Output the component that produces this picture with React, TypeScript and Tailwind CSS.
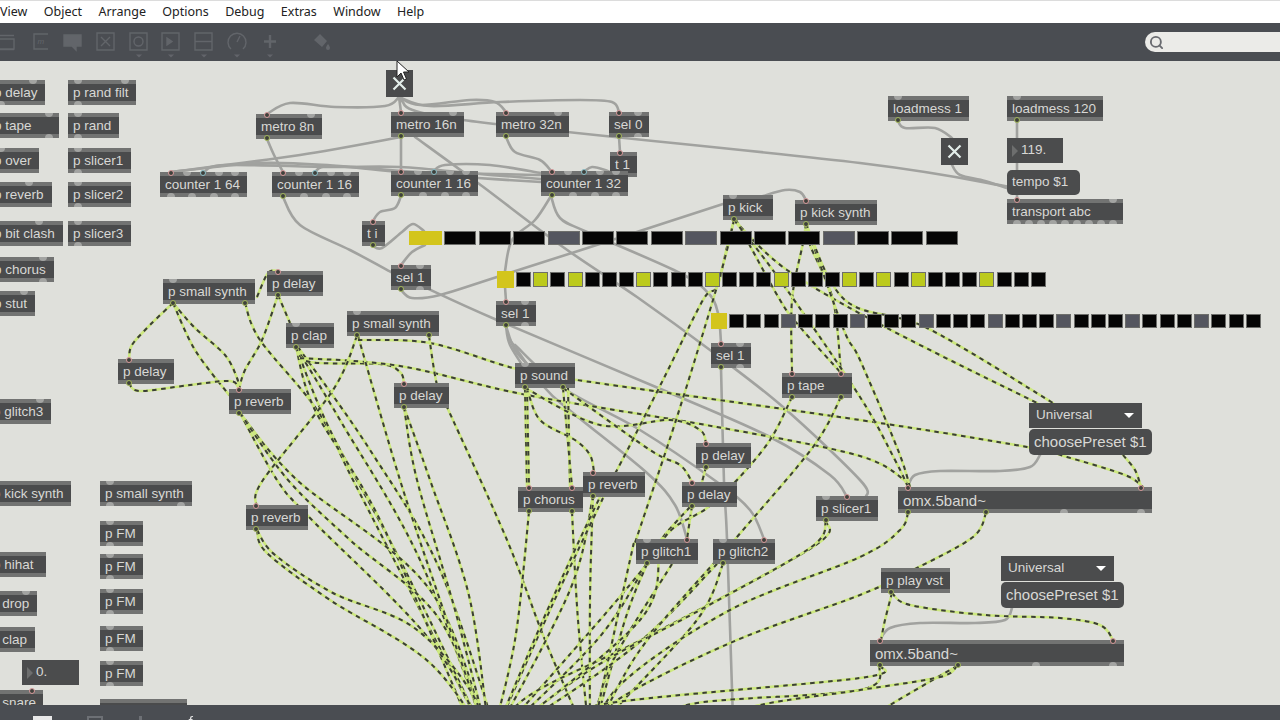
import { Search } from 'lucide-react'

type Pt = [number, number]

interface Box {
  x: number
  y: number
  w: number
  t: string
  kind?: 'msg' | 'menu' | 'num' | 'flat'
  h?: number
  ins?: number[]
  outs?: number[]
  idleIn?: number[]
  idleOut?: number[]
  cyan?: number[]
}

const boxes: Box[] = [
  // left column, cut by the window edge
  { x: -11, y: 80, w: 56, t: 'p delay', idleIn: [44], idleOut: [12] },
  { x: -11, y: 113, w: 70, t: 'p tape', idleIn: [60], idleOut: [60] },
  { x: -11, y: 148, w: 50, t: 'p over', idleIn: [12] },
  { x: -11, y: 182, w: 63, t: 'p reverb', idleIn: [40] },
  { x: -11, y: 221, w: 74, t: 'p bit clash', idleIn: [50] },
  { x: -11, y: 257, w: 65, t: 'p chorus', idleIn: [54], idleOut: [54] },
  { x: -11, y: 291, w: 46, t: 'p stut', idleIn: [35] },
  { x: -12, y: 399, w: 63, t: 'p glitch3', idleIn: [52] },
  { x: -12, y: 481, w: 83, t: 'p kick synth' },
  { x: -12, y: 552, w: 58, t: 'p hihat' },
  { x: -14, y: 591, w: 51, t: 'p drop', idleIn: [40] },
  { x: -14, y: 627, w: 49, t: 'p clap' },
  { x: -14, y: 690, w: 57, t: 'p snare', ins: [46] },
  // second column
  { x: 68, y: 80, w: 68, t: 'p rand filt', idleIn: [10, 57], idleOut: [10] },
  { x: 68, y: 113, w: 51, t: 'p rand', idleOut: [10], idleIn: [10] },
  { x: 68, y: 148, w: 63, t: 'p slicer1', idleIn: [10], idleOut: [10] },
  { x: 68, y: 182, w: 63, t: 'p slicer2', idleIn: [10], idleOut: [10] },
  { x: 68, y: 221, w: 63, t: 'p slicer3', idleIn: [10], idleOut: [10] },
  { x: 100, y: 481, w: 92, t: 'p small synth', idleIn: [10], idleOut: [10, 81] },
  { x: 100, y: 521, w: 43, t: 'p FM', idleIn: [10], idleOut: [10] },
  { x: 100, y: 554, w: 43, t: 'p FM', idleIn: [10], idleOut: [10] },
  { x: 100, y: 589, w: 43, t: 'p FM', idleIn: [10], idleOut: [10] },
  { x: 100, y: 626, w: 43, t: 'p FM', idleIn: [10], idleOut: [10] },
  { x: 100, y: 661, w: 43, t: 'p FM', idleIn: [10], idleOut: [10] },
  { x: 100, y: 699, w: 87, t: '' },
  // metros and counters
  { x: 256, y: 114, w: 66, t: 'metro 8n', ins: [11], outs: [11], idleIn: [55] },
  { x: 391, y: 112, w: 73, t: 'metro 16n', ins: [10], outs: [10], idleIn: [62] },
  { x: 496, y: 112, w: 73, t: 'metro 32n', ins: [10], outs: [10], idleIn: [62] },
  { x: 609, y: 112, w: 40, t: 'sel 0', ins: [10], outs: [10], idleIn: [29], idleOut: [29] },
  { x: 610, y: 152, w: 27, t: 't 1', ins: [10], outs: [10] },
  { x: 160, y: 172, w: 87, t: 'counter 1 64', ins: [11], cyan: [43], idleIn: [27, 59, 75], idleOut: [11, 32, 54, 75] },
  { x: 272, y: 172, w: 87, t: 'counter 1 16', ins: [11], outs: [11], cyan: [43], idleIn: [27, 59, 75], idleOut: [32, 54, 75] },
  { x: 391, y: 171, w: 87, t: 'counter 1 16', ins: [10], outs: [10], cyan: [43], idleIn: [27, 59, 75], idleOut: [32, 54, 75] },
  { x: 541, y: 171, w: 87, t: 'counter 1 32', ins: [11], outs: [11], cyan: [43], idleIn: [27, 59, 75], idleOut: [32, 54, 75] },
  { x: 362, y: 221, w: 23, t: 't i', ins: [11], outs: [11] },
  { x: 391, y: 265, w: 40, t: 'sel 1', ins: [10], outs: [10], idleIn: [29], idleOut: [29] },
  { x: 496, y: 301, w: 40, t: 'sel 1', ins: [10], outs: [10], idleIn: [29], idleOut: [29] },
  { x: 711, y: 343, w: 40, t: 'sel 1', ins: [10], outs: [10], idleIn: [29], idleOut: [29] },
  // instruments
  { x: 723, y: 195, w: 50, t: 'p kick', outs: [11], idleIn: [10] },
  { x: 795, y: 200, w: 82, t: 'p kick synth', ins: [11], outs: [11] },
  { x: 163, y: 279, w: 92, t: 'p small synth', outs: [10, 82], idleIn: [10] },
  { x: 267, y: 271, w: 56, t: 'p delay', ins: [11], outs: [11] },
  { x: 286, y: 323, w: 48, t: 'p clap', outs: [10], idleIn: [10] },
  { x: 347, y: 311, w: 92, t: 'p small synth', outs: [10, 82], idleIn: [10] },
  { x: 118, y: 359, w: 56, t: 'p delay', ins: [11], outs: [11] },
  { x: 229, y: 389, w: 62, t: 'p reverb', ins: [10], outs: [10] },
  { x: 394, y: 383, w: 55, t: 'p delay', ins: [10], outs: [10] },
  { x: 515, y: 363, w: 60, t: 'p sound', outs: [10, 48], idleIn: [10] },
  { x: 782, y: 373, w: 70, t: 'p tape', ins: [10, 59], outs: [10, 59] },
  { x: 696, y: 443, w: 55, t: 'p delay', ins: [10], outs: [10] },
  { x: 682, y: 482, w: 55, t: 'p delay', ins: [10], outs: [10] },
  { x: 518, y: 487, w: 65, t: 'p chorus', ins: [11, 54], outs: [11, 54] },
  { x: 583, y: 472, w: 62, t: 'p reverb', ins: [10], outs: [10] },
  { x: 816, y: 496, w: 62, t: 'p slicer1', ins: [31], outs: [10], idleIn: [10] },
  { x: 636, y: 539, w: 62, t: 'p glitch1', ins: [51], outs: [11], idleIn: [11] },
  { x: 713, y: 539, w: 62, t: 'p glitch2', ins: [51], outs: [10], idleIn: [10] },
  { x: 246, y: 505, w: 62, t: 'p reverb', ins: [10], outs: [10] },
  { x: 881, y: 568, w: 69, t: 'p play vst', outs: [10] },
  // right side
  { x: 888, y: 96, w: 81, t: 'loadmess 1', outs: [10], idleIn: [10] },
  { x: 1007, y: 96, w: 96, t: 'loadmess 120', outs: [10], idleIn: [10] },
  { x: 1007, y: 199, w: 116, t: 'transport abc', ins: [10], idleIn: [106], idleOut: [10, 22, 34, 46, 58, 70, 82, 94, 106] },
  { x: 898, y: 487, w: 254, h: 26, t: 'omx.5band~', ins: [10, 243], outs: [10, 88], idleOut: [166, 243] },
  { x: 870, y: 640, w: 254, h: 26, t: 'omx.5band~', ins: [10, 243], outs: [10, 88], idleOut: [166, 243] },
  // message, menu and number boxes
  { x: 1007, y: 170, w: 73, t: 'tempo $1', kind: 'msg' },
  { x: 1029, y: 429, w: 123, h: 26, t: 'choosePreset $1', kind: 'msg' },
  { x: 1001, y: 582, w: 123, h: 26, t: 'choosePreset $1', kind: 'msg' },
  { x: 1029, y: 403, w: 113, t: 'Universal', kind: 'menu' },
  { x: 1001, y: 556, w: 113, t: 'Universal', kind: 'menu' },
  { x: 1007, y: 138, w: 56, t: '119.', kind: 'num' },
  { x: 22, y: 660, w: 57, t: '0.', kind: 'num' },
]

const grayCords: Pt[][] = [
  [[399, 97], [385, 106], [335, 107], [290, 103], [267, 114]],
  [[399, 97], [401, 112]],
  [[399, 97], [420, 105], [470, 100], [495, 102], [506, 112]],
  [[399, 97], [430, 106], [500, 102], [580, 100], [612, 102], [619, 112]],
  [[401, 137], [300, 155], [171, 172]],
  [[401, 137], [401, 171]],
  [[267, 139], [274, 155], [283, 172]],
  [[400, 100], [463, 120], [860, 163], [1010, 187]],
  [[204, 172], [225, 165], [330, 167], [400, 167], [480, 174], [541, 179]],
  [[171, 172], [260, 163], [340, 166], [420, 172], [541, 175]],
  [[315, 172], [330, 166], [400, 172], [478, 178], [541, 182]],
  [[434, 171], [445, 165], [490, 165], [541, 173]],
  [[585, 171], [592, 167], [605, 170], [620, 177]],
  [[619, 137], [620, 152]],
  [[506, 137], [515, 152], [540, 160], [551, 171]],
  [[283, 197], [300, 225], [350, 250], [391, 272]],
  [[401, 196], [395, 208], [380, 212], [373, 221]],
  [[373, 246], [382, 248], [402, 232], [413, 224], [424, 231]],
  [[425, 245], [412, 252], [401, 265]],
  [[401, 290], [412, 298], [440, 295], [497, 277], [643, 230], [723, 204]],
  [[551, 196], [535, 220], [512, 240], [505, 271]],
  [[505, 287], [506, 301]],
  [[551, 196], [560, 218], [587, 232], [680, 273], [710, 295], [718, 313]],
  [[415, 137], [478, 183], [563, 247], [637, 297], [710, 350], [783, 407], [860, 480], [866, 497]],
  [[420, 285], [497, 320], [663, 390], [770, 437], [830, 475], [847, 497]],
  [[506, 326], [510, 345], [527, 372]],
  [[506, 326], [515, 350], [535, 372]],
  [[510, 340], [545, 388], [573, 413], [647, 473], [675, 505], [687, 539]],
  [[515, 345], [563, 388], [640, 430], [717, 482], [750, 510], [764, 539]],
  [[720, 327], [721, 343]],
  [[721, 368], [724, 482], [727, 539], [733, 720]],
  [[1040, 455], [1030, 467], [1000, 471], [940, 471], [915, 475], [908, 487]],
  [[1012, 608], [1005, 620], [975, 623], [920, 623], [890, 628], [880, 640]],
  [[898, 121], [905, 128], [935, 128], [952, 138]],
  [[952, 165], [960, 175], [985, 181], [1010, 189]],
  [[1017, 121], [1017, 199]],
  [[763, 196], [785, 190], [800, 192], [806, 200]],
]

const B1: Pt = [490, 745]
const B2: Pt = [590, 745]

const signalCords: Pt[][] = [
  [[173, 303], [150, 325], [132, 345], [129, 359]],
  [[173, 303], [195, 328], [225, 355], [237, 378], [239, 389]],
  [[173, 303], [195, 350], [229, 395]],
  [[245, 303], [260, 340], [317, 410], [353, 480], [420, 610], B1],
  [[257, 297], [268, 273], [278, 271]],
  [[278, 295], [262, 340], [245, 370], [239, 389]],
  [[278, 295], [290, 323]],
  [[129, 383], [140, 391], [190, 385], [230, 381], [239, 389]],
  [[296, 347], [330, 430], [400, 560], [480, 725]],
  [[296, 347], [340, 420], [420, 560], B1],
  [[298, 347], [370, 450], [440, 570], [500, 745]],
  [[296, 347], [315, 410], [380, 520], [470, 725]],
  [[296, 347], [310, 362], [380, 364], [400, 372], [404, 383]],
  [[300, 358], [400, 366], [527, 395], [717, 427], [860, 456], [908, 483]],
  [[240, 413], [277, 480], [310, 518], [430, 640], B1],
  [[240, 413], [297, 480], [430, 590], B1],
  [[240, 413], [288, 480], [350, 540], [440, 620], B1],
  [[404, 407], [430, 480], [470, 600], B1],
  [[404, 407], [417, 480], [455, 610], B1],
  [[357, 336], [333, 390], [263, 480], [256, 505]],
  [[358, 336], [400, 480], [440, 600], B1],
  [[358, 340], [430, 343], [513, 368], [577, 380], [860, 420], [1027, 447], [1067, 457], [1125, 475], [1143, 487]],
  [[429, 336], [437, 385], [447, 407], [507, 540], [545, 640], B2],
  [[257, 530], [267, 553], [330, 600], [430, 663], B1],
  [[257, 530], [275, 555], [333, 593], [413, 627], [470, 690], B1],
  [[525, 388], [527, 487]],
  [[527, 388], [529, 487]],
  [[568, 388], [570, 487]],
  [[563, 388], [572, 487]],
  [[527, 388], [540, 420], [575, 440], [590, 455], [594, 472]],
  [[525, 388], [600, 425], [670, 420], [700, 430], [706, 443]],
  [[563, 388], [650, 450], [680, 465], [692, 482]],
  [[529, 512], [515, 640], B1],
  [[572, 512], [578, 620], B2],
  [[593, 496], [570, 590], B1],
  [[593, 496], [590, 600], B2],
  [[603, 498], [550, 610], B1],
  [[706, 467], [702, 482]],
  [[692, 506], [687, 539]],
  [[690, 507], [663, 537], [647, 563], [597, 640], B1],
  [[647, 564], [600, 620], B1],
  [[647, 564], [625, 620], B2],
  [[672, 564], [610, 667], B2],
  [[723, 564], [697, 620], [610, 715], B2],
  [[717, 564], [630, 650], B1],
  [[826, 521], [813, 547], [647, 637], [527, 697], B1],
  [[826, 521], [810, 548], [700, 610], [590, 670], B1],
  [[908, 513], [900, 530], [860, 557], [730, 610], [620, 685], B2],
  [[986, 513], [973, 537], [917, 568], [860, 595], [730, 643], [610, 705], B2],
  [[880, 666], [860, 678], [610, 703], [560, 725]],
  [[880, 666], [860, 690], [697, 703], [650, 725]],
  [[957, 666], [890, 705], [860, 725]],
  [[957, 666], [940, 677], [860, 690], [760, 705], [700, 725]],
  [[734, 220], [727, 247], [717, 287], [703, 300], [663, 380], [617, 470], [600, 497], [543, 620], B1],
  [[734, 220], [727, 250], [713, 300], [677, 417], [637, 537], [630, 560], B2],
  [[736, 220], [780, 300], [800, 327], [841, 373]],
  [[734, 220], [787, 270], [887, 328], [1037, 403]],
  [[806, 224], [803, 243], [792, 300], [792, 373]],
  [[806, 224], [810, 245], [833, 300], [841, 373]],
  [[806, 224], [843, 328], [860, 360], [898, 450], [910, 487]],
  [[806, 224], [845, 300], [927, 328], [1053, 403]],
  [[734, 220], [780, 280], [860, 397], [895, 460], [908, 487]],
  [[792, 397], [770, 440], [737, 480], [707, 508], [663, 540], [640, 620], B1],
  [[841, 397], [813, 447], [737, 537], [640, 650], B2],
  [[1123, 455], [1135, 470], [1141, 487]],
  [[892, 593], [885, 620], [881, 640]],
  [[892, 593], [910, 605], [985, 615], [1060, 618], [1100, 625], [1113, 640]],
]

const catmull = (pts: Pt[]) => {
  let d = `M${pts[0][0]} ${pts[0][1]}`
  for (let i = 0; i < pts.length - 1; i++) {
    const p0 = pts[i - 1] || pts[i]
    const p1 = pts[i]
    const p2 = pts[i + 1]
    const p3 = pts[i + 2] || p2
    const c1x = p1[0] + (p2[0] - p0[0]) / 6
    const c1y = p1[1] + (p2[1] - p0[1]) / 6
    const c2x = p2[0] - (p3[0] - p1[0]) / 6
    const c2y = p2[1] - (p3[1] - p1[1]) / 6
    d += ` C${c1x} ${c1y} ${c2x} ${c2y} ${p2[0]} ${p2[1]}`
  }
  return d
}

function Port({ x, top, color }: { x: number; top: boolean; color: string }) {
  return (
    <span
      className={`absolute w-[6px] h-[6px] rounded-full border bg-[#3f413c] ${top ? '-top-[2px]' : '-bottom-[2px]'}`}
      style={{ left: x - 3, borderColor: color }}
    />
  )
}

function Idle({ x, top }: { x: number; top: boolean }) {
  return (
    <span
      className={`absolute w-[8px] h-[4px] bg-[#a3a4a2] ${top ? 'top-0 rounded-b-full' : 'bottom-0 rounded-t-full'}`}
      style={{ left: x - 4 }}
    />
  )
}

function Node({ b }: { b: Box }) {
  const pos = { left: b.x, top: b.y - 61, width: b.w, height: b.h ?? 25 }
  if (b.kind === 'msg') {
    return (
      <div
        className={`absolute flex items-center pl-[5px] rounded-[5px] bg-[#4b4c4d] text-[#d8d8d5] whitespace-nowrap ${b.h ? 'text-[15px]' : 'text-[13.5px]'}`}
        style={pos}
      >
        {b.t}
      </div>
    )
  }
  if (b.kind === 'menu') {
    return (
      <div className="absolute flex items-center justify-between pl-[7px] pr-[8px] bg-[#4b4c4d] text-[#d8d8d5] text-[13.5px]" style={pos}>
        {b.t}
        <span className="w-0 h-0 border-x-[5px] border-x-transparent border-t-[5px] border-t-white" />
      </div>
    )
  }
  if (b.kind === 'num') {
    return (
      <div className="absolute flex items-center pl-[5px] gap-[3px] bg-[#4b4c4d] text-[#d8d8d5] text-[13.5px]" style={pos}>
        <span className="w-0 h-0 border-y-[6px] border-y-transparent border-l-[6px] border-l-[#6d6e6e]" />
        {b.t}
      </div>
    )
  }
  return (
    <div className="absolute flex flex-col bg-[#4a4b4c]" style={pos}>
      <div className="h-[4px] shrink-0 bg-[#727372]" />
      <div className={`flex-1 flex items-center pl-[5px] text-[#d8d8d5] leading-none whitespace-nowrap ${b.h ? 'text-[15px]' : 'text-[13.5px]'}`}>{b.t}</div>
      <div className="h-[4px] shrink-0 bg-[#727372]" />
      {(b.idleIn || []).map((x) => <Idle key={'a' + x} x={x} top />)}
      {(b.idleOut || []).map((x) => <Idle key={'b' + x} x={x} top={false} />)}
      {(b.ins || []).map((x) => <Port key={'c' + x} x={x} top color="#d99a9c" />)}
      {(b.cyan || []).map((x) => <Port key={'d' + x} x={x} top color="#8cc0c9" />)}
      {(b.outs || []).map((x) => <Port key={'e' + x} x={x} top={false} color="#a3b85a" />)}
    </div>
  )
}

function Toggle({ x, y }: { x: number; y: number }) {
  return (
    <div className="absolute w-[27px] h-[27px] bg-[#4a4b4c] flex items-center justify-center" style={{ left: x, top: y - 61 }}>
      <svg width="15" height="15" viewBox="0 0 15 15" fill="none" stroke="#e3eeea" strokeWidth="2.2">
        <path d="M1.500 1.500l12 12M13.500 1.500l-12 12" />
      </svg>
    </div>
  )
}

function Steps({ x, y, w, cell, h, count, first, colors }: {
  x: number; y: number; w: number; cell: number; h: number; count: number; first: number; colors: Record<number, string>
}) {
  const cells = Array.from({ length: count }, (_, i) => i)
  return (
    <div className="absolute flex justify-between items-center" style={{ left: x, top: y - 61, width: w, height: h + 2 }}>
      {cells.map((i) => (
        <div
          key={i}
          className={i === 0 ? '' : 'border border-[#6d6e6b]'}
          style={{
            width: i === 0 ? first : cell,
            height: i === 0 && cell < 20 ? h + 2 : h,
            background: i === 0 ? '#d3c51c' : colors[i] || '#050505',
          }}
        />
      ))}
    </div>
  )
}

const olive = '#bcca1c'
const slate = '#54565f'

function ToolIcon({ children, arrow }: { children: React.ReactNode; arrow?: boolean }) {
  return (
    <svg width="20" height="32" viewBox="0 0 20 32" fill="none" stroke="#62656a" strokeWidth="1.4" className="shrink-0">
      {children}
      {arrow && <path d="M7 28.500h6l-3 3z" fill="#62656a" stroke="none" />}
    </svg>
  )
}

export default function App() {
  return (
    <div className="relative w-[1280px] h-[720px] overflow-hidden flex flex-col blur-[0.5px] font-['Liberation_Sans',Arial,sans-serif]">
      {/* menu bar */}
      <div className="h-[23px] shrink-0 bg-white border-t border-[#dcdcdc] flex items-center gap-[16.4px] text-[#222] font-['Noto_Sans',sans-serif]">
        {['View', 'Object', 'Arrange', 'Options', 'Debug', 'Extras', 'Window', 'Help'].map((m) => (
          <span key={m} className="text-[12.5px]">{m}</span>
        ))}
      </div>

      {/* toolbar */}
      <div className="h-[38px] shrink-0 bg-[#4a4d52] flex items-center">
        <div className="flex items-start gap-[12.7px] -ml-[2px]">
          <ToolIcon><path d="M1 9.500h15M1 13h15v10H1M1 23.500h15" /></ToolIcon>
          <ToolIcon><path d="M17 8H3v15h14" /><text x="6.500" y="18" fontSize="8" fill="#62656a" stroke="none" fontStyle="italic">m</text></ToolIcon>
          <ToolIcon><path d="M1 9h17v11h-5v4l-4-4H1z" fill="#62656a" /></ToolIcon>
          <ToolIcon><path d="M1 7h17v17H1zM5 11l9 9M14 11l-9 9" /></ToolIcon>
          <ToolIcon arrow><path d="M1 7h17v17H1z" /><circle cx="9.500" cy="15.500" r="4.500" /></ToolIcon>
          <ToolIcon arrow><path d="M1 7h17v17H1z" /><path d="M6 12l5 3.500-5 3.500z" fill="#62656a" /></ToolIcon>
          <ToolIcon arrow><path d="M1 7h17v17H1zM1 15.500h17" /></ToolIcon>
          <ToolIcon arrow><path d="M4 23a9 9 0 1 1 12 0M10 16l3-6" /></ToolIcon>
          <ToolIcon arrow><path d="M10 9v13M4 15.500h12" strokeWidth="2.400" /></ToolIcon>
        </div>
        <svg width="20" height="20" viewBox="0 0 20 20" className="ml-[31px]" fill="#62656a">
          <path d="M9 2l7 7-5 6-8-7zM17 12c1.500 2 2 3 2 4a2 2 0 0 1-4 0c0-1 .5-2 2-4z" />
        </svg>
        <div className="ml-auto w-[135px] h-[20px] bg-[#ebebe8] rounded-l-full flex items-center pl-[4px]">
          <Search size={15} strokeWidth={3} className="text-[#696b70]" />
        </div>
      </div>

      {/* patcher canvas */}
      <div className="relative flex-1 bg-[#dfe0db] overflow-hidden">
        <svg className="absolute inset-0 w-[1280px] h-[644px]" viewBox="0 61 1280 644" fill="none" strokeLinecap="round">
          {grayCords.map((c, i) => (
            <path key={i} d={catmull(c)} stroke="#a1a29f" strokeWidth="2.6" />
          ))}
          {signalCords.map((c, i) => (
            <g key={i}>
              <path d={catmull(c)} stroke="#cde87f" strokeWidth="2.600" />
              <path d={catmull(c)} stroke="#3b3e36" strokeWidth="2" strokeDasharray="4.500 4.500" strokeLinecap="butt" />
            </g>
          ))}
        </svg>

        {boxes.map((b, i) => <Node key={i} b={b} />)}
        <Toggle x={386} y={70} />
        <Toggle x={941} y={138} />

        <Steps
          x={409} y={230} w={549} cell={32} h={14} count={16} first={33}
          colors={{ 4: slate, 8: slate, 12: slate }}
        />
        <Steps
          x={497} y={271} w={549} cell={15} h={15} count={32} first={17}
          colors={{ 2: olive, 4: olive, 8: olive, 12: olive, 16: olive, 20: olive, 22: olive, 24: olive, 28: olive }}
        />
        <Steps
          x={711} y={313} w={550} cell={15} h={14} count={32} first={16}
          colors={{ 4: slate, 8: slate, 12: slate, 16: slate, 20: slate, 24: slate, 28: slate }}
        />
      </div>

      {/* bottom toolbar, mostly cut off */}
      <div className="h-[15px] shrink-0 bg-[#4a4d52] overflow-hidden flex items-start pt-[11px]">
        <div className="ml-[33px] w-[19px] h-[6px] bg-[#e8e8e8]" />
        <div className="ml-[35px] w-[16px] h-[6px] border-x-2 border-t-2 border-[#6d7075]" />
        <div className="ml-[36px] w-[3px] h-[6px] bg-[#6d7075]" />
        <span className="ml-[46px] -mt-[1px] text-[14px] leading-none text-[#e0e0e0] italic">f</span>
      </div>

      {/* mouse pointer */}
      <svg className="absolute left-[396px] top-[60px]" width="14" height="22" viewBox="0 0 14 22">
        <path d="M1 1v16l4-4 3 7 2.500-1-3-7h5.500z" fill="#fff" stroke="#222" strokeWidth="1" />
      </svg>
    </div>
  )
}
